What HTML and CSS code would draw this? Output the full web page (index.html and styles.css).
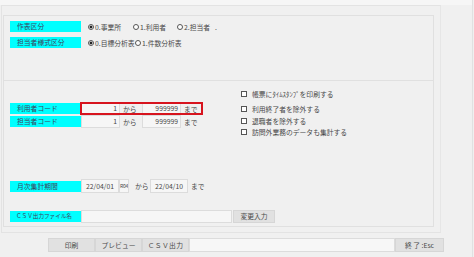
FILE: index.html
```html
<!DOCTYPE html>
<html lang="ja">
<head>
<meta charset="utf-8">
<link rel="stylesheet" href="styles.css">
</head>
<body>
<div class="win">
  <div class="topstrip"></div>
  <div class="frame">
    <div class="panel p1">
      <div class="row">
        <div class="lbl">作表区分</div>
        <div class="opts">
          <span class="opt w45"><i class="rb on"></i>0.事業所</span>
          <span class="opt w44"><i class="rb"></i>1.利用者</span>
          <span class="opt w38"><i class="rb"></i>2.担当者</span>
          <span class="dot">.</span>
        </div>
      </div>
      <div class="row r2">
        <div class="lbl">担当者様式区分</div>
        <div class="opts">
          <span class="opt w47"><i class="rb on"></i>0.目標分析表</span>
          <span class="opt"><i class="rb"></i>1.件数分析表</span>
        </div>
      </div>
    </div>
    <div class="panel p2">
      <div class="upper">
        <div class="codes">
          <div class="crow hl">
            <div class="lbl">利用者コード</div>
            <div class="inp num w39">1</div>
            <span class="kara">から</span>
            <div class="inp num w39">999999</div>
            <span class="made">まで</span>
            <div class="redbox"></div>
          </div>
          <div class="crow">
            <div class="lbl">担当者コード</div>
            <div class="inp num w39">1</div>
            <span class="kara">から</span>
            <div class="inp num w39">999999</div>
            <span class="made">まで</span>
          </div>
        </div>
        <div class="checks">
          <div class="chk"><i class="cb"></i>帳票にﾀｲﾑｽﾀﾝﾌﾟを印刷する</div>
          <div class="chk c2"><i class="cb"></i>利用終了者を除外する</div>
          <div class="chk c3"><i class="cb"></i>退職者を除外する</div>
          <div class="chk c4"><i class="cb"></i>訪問外業務のデータも集計する</div>
        </div>
      </div>
      <div class="row period">
        <div class="lbl">月次集計期間</div>
        <div class="inp date w38">22/04/01</div>
        <div class="inp era">R04</div>
        <span class="kara2">から</span>
        <div class="inp date w38">22/04/10</div>
        <span class="made">まで</span>
      </div>
      <div class="row csv">
        <div class="lbl narrow">ＣＳＶ出力ファイル名</div>
        <div class="inp file"></div>
        <div class="btn chg">変更入力</div>
      </div>
    </div>
  </div>
  <div class="bar">
    <div class="btn b47">印刷</div>
    <div class="btn b47">プレビュー</div>
    <div class="btn b47 narrowbtn">ＣＳＶ出力</div>
    <div class="inp msg"></div>
    <div class="btn exit">終 了 :Esc</div>
  </div>
</div>
</body>
</html>
```

FILE: styles.css
```css
* { box-sizing: border-box; }
html, body { margin: 0; padding: 0; }
body {
  width: 474px;
  height: 257px;
  overflow: hidden;
  background: #f0f0f0;
  font-family: "Noto Sans CJK JP", "Noto Sans", sans-serif;
  font-size: 6.8px;
  color: #484848;
}
.win {
  width: 473px;
  height: 257px;
  border-right: 1px solid #e1e1e1;
}
.topstrip { height: 5px; background: #f6f6f6; }
.frame {
  margin-left: 1px;
  width: 440px;
  height: 228px;
  border: 1px solid #e3e3e3;
  border-right-color: #e6e6e6;
  padding: 9px 0 0 1px;
}
.panel {
  width: 431px;
  border: 1px solid #e0e0e0;
  padding-left: 6px;
}
.p1 { height: 66px; padding-top: 5px; }
.p2 { height: 146px; border-top: 0; padding-top: 8px; }

.row { display: flex; align-items: center; height: 11px; }
.r2 { margin-top: 5px; }
.lbl {
  flex: none;
  width: 71px;
  height: 11px;
  line-height: 11px;
  background: #00ffff;
  color: #3a4660;
  padding-left: 7px;
  white-space: nowrap;
  overflow: hidden;
}
.lbl.narrow { font-size: 5.6px; padding-left: 6px; }
.opts { display: flex; align-items: center; margin-left: 7px; }
.opt { display: inline-flex; align-items: center; white-space: nowrap; }
.w45 { width: 45px; } .w44 { width: 44px; } .w38 { width: 38px; } .w47 { width: 47px; }
.rb {
  display: inline-block;
  width: 6px; height: 6px;
  border: 1px solid #555;
  border-radius: 50%;
  background: #fff;
  margin-right: 1px;
}
.rb.on { background: radial-gradient(circle, #222 0 1.3px, #fff 1.7px); }

.upper { display: flex; height: 49px; }
.codes { width: 231px; padding-top: 13px; }
.crow { position: relative; display: flex; align-items: center; height: 13px; }
.inp {
  flex: none;
  height: 13px;
  line-height: 11px;
  border: 1px solid #dcdcdc;
  background: #f6f6f6;
  white-space: nowrap;
}
.num { text-align: right; padding-right: 2px; }
.w39 { width: 39px; }
.w38 { width: 38px; }
.kara { width: 22px; padding-left: 3px; }
.made { margin-left: 3px; }
.redbox {
  position: absolute;
  left: 70px; top: 0;
  width: 123px; height: 13px;
  border: 2px solid #d7141e;
}
.chk { display: flex; align-items: center; height: 10px; white-space: nowrap; }
.c2 { margin-top: 5px; } .c3 { margin-top: 2px; } .c4 { margin-top: 1px; }
.cb {
  display: inline-block;
  width: 6px; height: 6px;
  border: 1px solid #555;
  background: #fff;
  margin-right: 5px;
}

.period { margin-top: 41px; height: 14px; }
.period .inp { height: 14px; line-height: 12px; }
.date { text-align: center; }
.period .era {
  width: 10px;
  overflow: hidden;
  font-size: 5px;
  letter-spacing: -0.3px;
  text-align: center;
}
.kara2 { width: 21px; padding-left: 6px; }
.csv { margin-top: 17px; height: 13px; }
.file { width: 151px; }
.btn {
  flex: none;
  height: 13px;
  line-height: 11px;
  text-align: center;
  background: #e1e1e1;
  border: 1px solid #d6d6d6;
  color: #4a4a4a;
  white-space: nowrap;
}
.chg { width: 42px; margin-left: 1px; }

.bar { display: flex; margin-top: 5px; margin-left: 48px; height: 14px; }
.bar .btn, .bar .inp { height: 14px; line-height: 12px; }
.b47 { width: 47px; }
.narrowbtn { letter-spacing: 0.3px; }
.msg { width: 206px; background: #f7f7f7; }
.exit { width: 49px; }
```
